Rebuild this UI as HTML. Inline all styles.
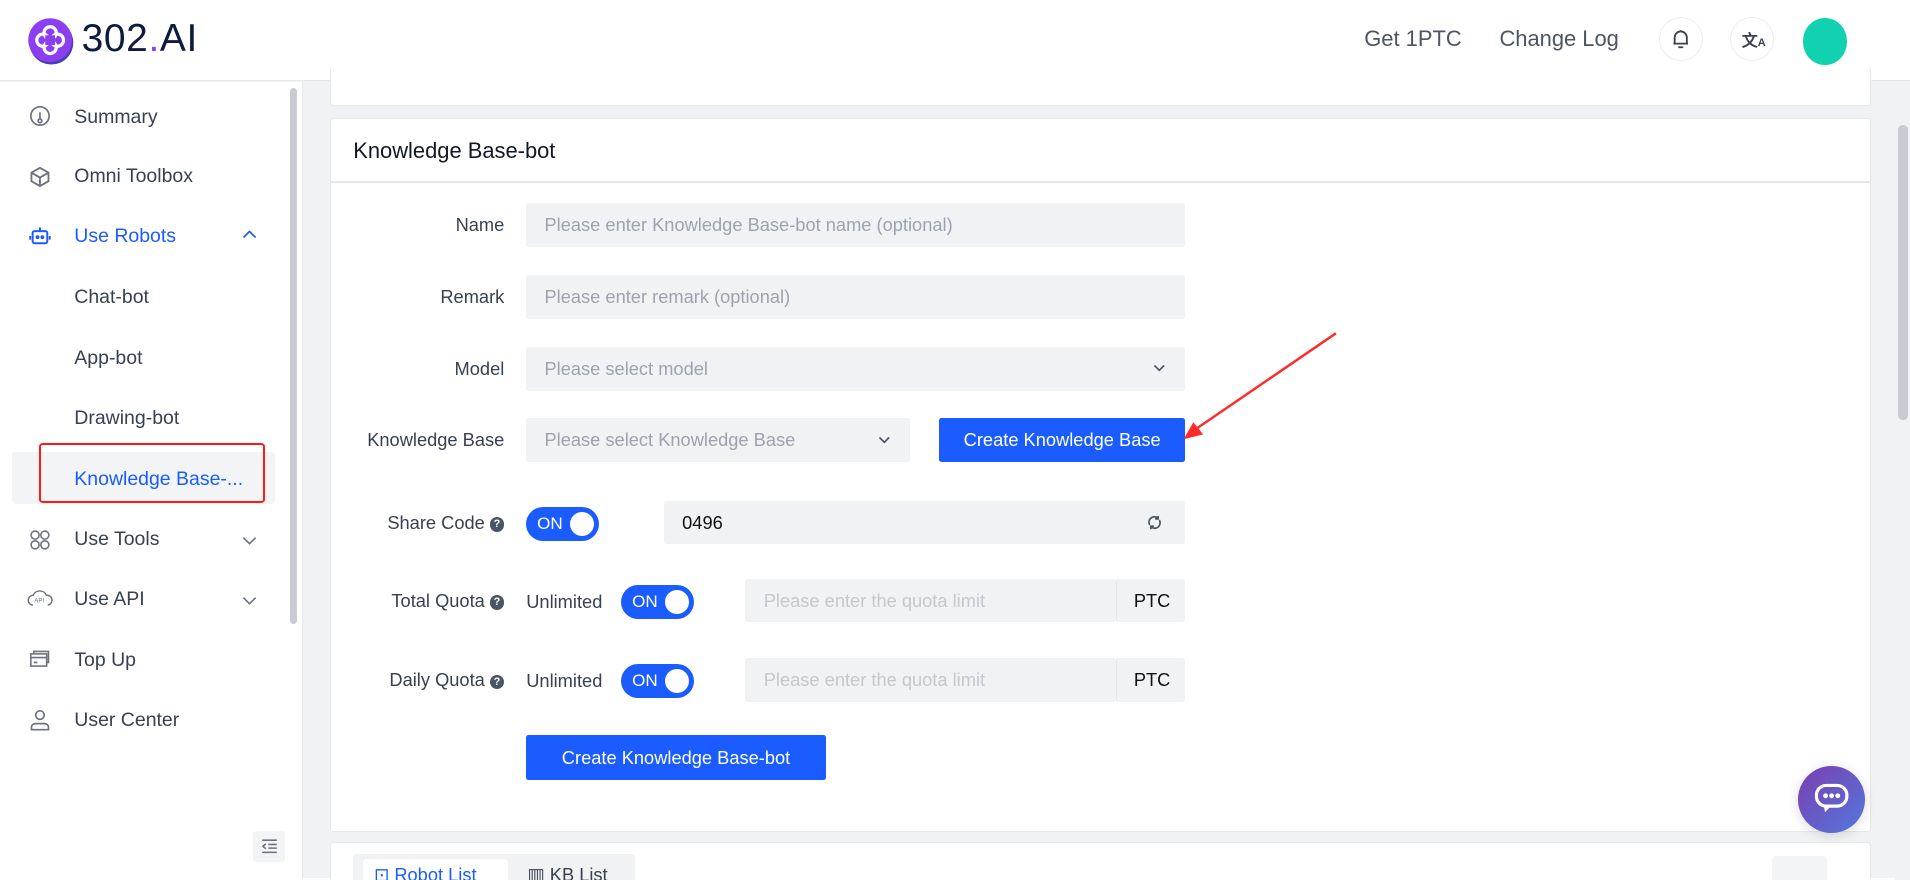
<!DOCTYPE html>
<html><head><meta charset="utf-8"><style>
html,body{margin:0;padding:0;background:#fff}
html{zoom:1.2181;height:721px;overflow:hidden}
body{width:1568px;height:721px;overflow:hidden;background:#f1f2f4;font-family:"Liberation Sans",sans-serif;position:relative;color:#374151}
.a{position:absolute}
.hdr{left:0;top:0;width:1568px;height:66px;background:#fff;border-bottom:1px solid #e5e7eb}
.side{left:0;top:67px;width:248px;height:680px;background:#fff;border-right:1px solid #e5e7eb}
.mi{position:absolute;left:61px;font-size:16px;color:#374151;line-height:20px}
.ic{position:absolute;left:24px;width:18px;height:18px}
.card{background:#fff;border:1px solid #e5e7eb;border-radius:3px}
.lbl{position:absolute;right:1154px;font-size:15px;color:#374151;text-align:right;white-space:nowrap}
.inp{position:absolute;background:#f1f2f4;border-radius:2px;font-size:15px;color:#9ca3af;line-height:36px;padding-left:15px;box-sizing:border-box;height:36px}
.btn{position:absolute;background:#1a5cff;color:#fff;font-size:15px;text-align:center;border-radius:2px}
.tg{position:absolute;width:60px;height:28px;background:#1a5cff;border-radius:14px;color:#fff;font-size:14px;line-height:28px}
.tg span{position:absolute;left:9px}
.tg i{position:absolute;right:4px;top:4px;width:20px;height:20px;border-radius:50%;background:#fff}
.q{display:inline-block;width:12px;height:12px;border-radius:50%;background:#4b5563;color:#fff;font-size:9px;line-height:12px;text-align:center;font-weight:bold;vertical-align:1px;margin-left:4px}
</style></head><body>
<div class="a hdr"></div>
<svg class="a" style="left:22px;top:14px" width="40" height="40" viewBox="0 0 40 40"><circle cx="20" cy="21" r="18" fill="#4b3bb5"/><circle cx="19" cy="19" r="18" fill="#8b3ff0"/><g fill="none" stroke="#fff" stroke-width="2.6"><circle cx="19" cy="13" r="5"/><circle cx="19" cy="25" r="5"/><circle cx="13" cy="19" r="5"/><circle cx="25" cy="19" r="5"/></g><rect x="15" y="15" width="8" height="8" fill="#8b3ff0"/></svg>
<div class="a" style="left:67px;top:14px;font-size:32px;color:#0f1b3d;letter-spacing:0.5px">302<span style="color:#8b3ff0">.</span>AI</div>
<div class="a" style="left:1120px;top:21px;font-size:18px;color:#4b5563">Get 1PTC</div>
<div class="a" style="left:1231px;top:21px;font-size:18px;color:#4b5563">Change Log</div>
<div class="a" style="left:1362px;top:14px;width:36px;height:36px;border:1px solid #eee;border-radius:50%;box-sizing:border-box"></div>
<svg class="a" style="left:1372px;top:24px" width="16" height="17" viewBox="0 0 16 17" fill="none" stroke="#374151" stroke-width="1.5"><path d="M3 12V7a5 5 0 0 1 10 0v5zM2 12h12M6 15h4M8 1v1"/></svg>
<div class="a" style="left:1420px;top:14px;width:36px;height:36px;border:1px solid #eee;border-radius:50%;box-sizing:border-box"></div>
<div class="a" style="left:1430px;top:23px;font-size:13px;color:#374151;font-weight:bold">文<span style="font-size:9px">A</span></div>
<div class="a" style="left:1480px;top:15px;width:36px;height:38px;border-radius:50%;background:#12d1b0"></div>

<div class="a side"></div>
<div class="a" style="left:238px;top:72px;width:6px;height:440px;background:#c8ccd2;border-radius:3px"></div>
<svg class="ic" style="top:86px" viewBox="0 0 18 18" fill="none" stroke="#6b7280" stroke-width="1.4"><circle cx="9" cy="9" r="7.5"/><circle cx="9" cy="13" r="1.5"/><path d="M9 11.5V6"/></svg>
<div class="mi" style="top:86px">Summary</div>
<svg class="ic" style="top:136px" viewBox="0 0 18 18" fill="none" stroke="#6b7280" stroke-width="1.5"><path d="M9 1.5l7 4v7l-7 4-7-4v-7zM2 5.5l7 4 7-4M9 9.5v7"/></svg>
<div class="mi" style="top:135px">Omni Toolbox</div>
<svg class="ic" style="top:185px" viewBox="0 0 18 18" fill="none" stroke="#1a5cff" stroke-width="1.6"><rect x="3" y="5" width="12" height="10" rx="1.5"/><path d="M9 2v3M1 9v3M17 9v3"/><circle cx="7" cy="10" r=".8" fill="#1a5cff"/><circle cx="11" cy="10" r=".8" fill="#1a5cff"/></svg>
<div class="mi" style="top:184px;color:#1a5cff">Use Robots</div>
<svg class="a" style="left:198px;top:188px" width="14" height="10" viewBox="0 0 14 10" fill="none" stroke="#1a5cff" stroke-width="1.4"><path d="M2 7l5-5 5 5"/></svg>
<div class="mi" style="top:234px">Chat-bot</div>
<div class="mi" style="top:284px">App-bot</div>
<div class="mi" style="top:333px">Drawing-bot</div>
<div class="a" style="left:10px;top:371px;width:216px;height:43px;background:#f3f4f6;border-radius:3px"></div>
<div class="a" style="left:32px;top:364px;width:182px;height:46px;border:2px solid #ff1a1a;border-radius:3px"></div>
<div class="mi" style="top:383px;color:#1a5cff">Knowledge Base-...</div>
<svg class="ic" style="top:434px" viewBox="0 0 18 18" fill="none" stroke="#6b7280" stroke-width="1.3"><circle cx="5" cy="5" r="3.3"/><circle cx="13" cy="5" r="3.3"/><circle cx="5" cy="13" r="3.3"/><circle cx="13" cy="13" r="3.3"/></svg>
<div class="mi" style="top:433px">Use Tools</div>
<svg class="a" style="left:198px;top:438px" width="14" height="10" viewBox="0 0 14 10" fill="none" stroke="#6b7280" stroke-width="1.3"><path d="M2 3l5 5 5-5"/></svg>
<svg class="ic" style="top:483px;width:22px;left:22px" viewBox="0 0 22 18" fill="none" stroke="#6b7280" stroke-width="1.2"><path d="M5 14a4 4 0 0 1 0-8 6 6 0 0 1 11 0 4 4 0 0 1 1 8"/><text x="6" y="12" font-size="5" fill="#6b7280" stroke="none">API</text></svg>
<div class="mi" style="top:482px">Use API</div>
<svg class="a" style="left:198px;top:488px" width="14" height="10" viewBox="0 0 14 10" fill="none" stroke="#6b7280" stroke-width="1.3"><path d="M2 3l5 5 5-5"/></svg>
<svg class="ic" style="top:533px" viewBox="0 0 18 18" fill="none" stroke="#6b7280" stroke-width="1.3"><rect x="1.5" y="4" width="13" height="10"/><path d="M1.5 7h13M4 4V2h12v9h-1.5M4 11h3"/></svg>
<div class="mi" style="top:532px">Top Up</div>
<svg class="ic" style="top:582px" viewBox="0 0 18 18" fill="none" stroke="#6b7280" stroke-width="1.4"><circle cx="9" cy="5" r="3.5"/><path d="M2 17v-2a3 3 0 0 1 3-3h8a3 3 0 0 1 3 3v2z"/></svg>
<div class="mi" style="top:581px">User Center</div>
<div class="a" style="left:208px;top:682px;width:26px;height:26px;background:#f3f4f6;border-radius:3px"></div>
<svg class="a" style="left:214px;top:689px" width="14" height="12" viewBox="0 0 14 12" fill="none" stroke="#6b7280" stroke-width="1.3"><path d="M1 1h12M6 4.5h7M6 7.5h7M1 11h12M4 4L1.5 6 4 8"/></svg>

<div class="a" style="left:1556px;top:67px;width:12px;height:680px;background:#f1f2f4"></div>
<div class="a" style="left:1558px;top:103px;width:8px;height:242px;background:#c8ccd2;border-radius:4px"></div>

<div class="a card" style="left:271px;top:55px;width:1263px;height:31px;border-top:none"></div>
<div class="a card" style="left:271px;top:97px;width:1263px;height:584px"></div>
<div class="a" style="left:290px;top:113px;font-size:18px;color:#111827">Knowledge Base-bot</div>
<div class="a" style="left:272px;top:149px;width:1263px;height:1px;background:#e5e7eb"></div>

<div class="lbl" style="top:176px">Name</div>
<div class="inp" style="left:432px;top:167px;width:541px">Please enter Knowledge Base-bot name (optional)</div>
<div class="lbl" style="top:235px">Remark</div>
<div class="inp" style="left:432px;top:226px;width:541px">Please enter remark (optional)</div>
<div class="lbl" style="top:294px">Model</div>
<div class="inp" style="left:432px;top:285px;width:541px">Please select model</div>
<svg class="a" style="left:946px;top:298px" width="12" height="8" viewBox="0 0 12 8" fill="none" stroke="#4b5563" stroke-width="1.4"><path d="M2 2l4 4 4-4"/></svg>
<div class="lbl" style="top:352px">Knowledge Base</div>
<div class="inp" style="left:432px;top:343px;width:315px">Please select Knowledge Base</div>
<svg class="a" style="left:720px;top:357px" width="12" height="8" viewBox="0 0 12 8" fill="none" stroke="#4b5563" stroke-width="1.4"><path d="M2 2l4 4 4-4"/></svg>
<div class="btn" style="left:771px;top:343px;width:202px;height:36px;line-height:36px">Create Knowledge Base</div>
<svg class="a" style="left:960px;top:268px" width="145" height="100" viewBox="960 268 145 100"><path d="M1097 274L980 354" stroke="#ff2a2a" stroke-width="2"/><path d="M972 361l16-4-8-10z" fill="#ff2a2a"/></svg>

<div class="lbl" style="top:420px">Share Code<span class="q">?</span></div>
<div class="tg" style="left:432px;top:416px"><span>ON</span><i></i></div>
<div class="inp" style="left:545px;top:411px;width:428px;color:#111">0496</div>
<svg class="a" style="left:941px;top:422px" width="14" height="14" viewBox="0 0 14 14" fill="none" stroke="#4b5563" stroke-width="1.4"><path d="M3 9a4.5 4.5 0 0 1 7-5.5M11 5a4.5 4.5 0 0 1-7 5.5M10 1.5v2.5h-2.5M4 12.5v-2.5h2.5"/></svg>

<div class="lbl" style="top:484px">Total Quota<span class="q">?</span></div>
<div class="a" style="left:432px;top:485px;font-size:15px;color:#374151">Unlimited</div>
<div class="tg" style="left:510px;top:480px"><span>ON</span><i></i></div>
<div class="inp" style="left:612px;top:475px;width:304px;color:#c4c8ce">Please enter the quota limit</div>
<div class="inp" style="left:916px;top:475px;width:57px;color:#111;padding-left:14px;border-left:1px solid #e5e7eb">PTC</div>

<div class="lbl" style="top:549px">Daily Quota<span class="q">?</span></div>
<div class="a" style="left:432px;top:550px;font-size:15px;color:#374151">Unlimited</div>
<div class="tg" style="left:510px;top:545px"><span>ON</span><i></i></div>
<div class="inp" style="left:612px;top:540px;width:304px;color:#c4c8ce">Please enter the quota limit</div>
<div class="inp" style="left:916px;top:540px;width:57px;color:#111;padding-left:14px;border-left:1px solid #e5e7eb">PTC</div>

<div class="btn" style="left:432px;top:603px;width:246px;height:37px;line-height:37px">Create Knowledge Base-bot</div>

<div class="a card" style="left:271px;top:691px;width:1263px;height:60px"></div>
<div class="a" style="left:290px;top:701px;width:231px;height:40px;background:#f1f2f4;border-radius:3px"></div>
<div class="a" style="left:298px;top:705px;width:119px;height:36px;background:#fff;border-radius:3px"></div>
<div class="a" style="left:307px;top:709px;font-size:15px;color:#1a5cff">⊡ Robot List</div>
<div class="a" style="left:433px;top:709px;font-size:15px;color:#374151">▥ KB List</div>
<div class="a" style="left:1455px;top:703px;width:45px;height:36px;background:#f3f4f6;border-radius:3px"></div>

<div class="a" style="left:1476px;top:629px;width:55px;height:55px;border-radius:50%;background:linear-gradient(135deg,#7a3fb0,#5577dd);box-shadow:0 2px 10px rgba(0,0,0,.15)"></div>
<svg class="a" style="left:1489px;top:643px" width="29" height="27" viewBox="0 0 29 27"><rect x="2" y="2" width="25" height="17" rx="8" fill="none" stroke="#fff" stroke-width="2.6"/><path d="M8 18l1 6 5-5z" fill="#fff"/><circle cx="9.5" cy="10.5" r="2" fill="#fff"/><circle cx="14.5" cy="10.5" r="2" fill="#fff"/><circle cx="19.5" cy="10.5" r="2" fill="#fff"/></svg>
</body></html>
